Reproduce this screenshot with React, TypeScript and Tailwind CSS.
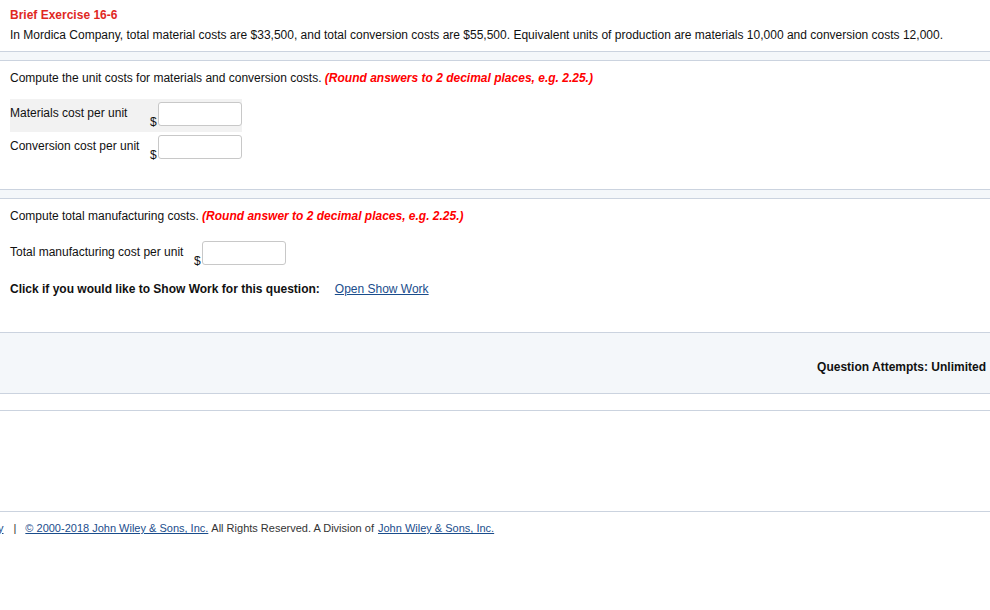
import React from "react";

function Band({ h }: { h: string }) {
  return <div className={`border-y border-[#cbd3df] bg-[#f4f7fa] ${h}`} />;
}

function Row({
  label,
  labelW,
  bg,
}: {
  label: string;
  labelW: string;
  bg?: boolean;
}) {
  return (
    <div className={`flex h-[33px] w-fit ${bg ? "bg-[#f2f2f2]" : ""}`}>
      <div className={`${labelW} pt-[7px] leading-[15px]`}>{label}</div>
      <div className="flex">
        <span className="pt-[17px] text-[12px] leading-[12px] w-[8px]">$</span>
        <div className="mt-[3px] h-[24px] w-[84px] rounded-[3px] border border-[#c8c8c8] bg-white" />
      </div>
    </div>
  );
}

export default function App() {
  return (
    <div
      className="w-[990px] h-[610px] bg-white text-[12px] text-[#111] overflow-hidden"
      style={{ fontFamily: '"Liberation Sans", Arial, sans-serif' }}
    >
      <div className="px-[10px] pt-[8px] pb-[8px]">
        <div className="font-bold text-[#e0281f] leading-[15px]">Brief Exercise 16-6</div>
        <div className="mt-[5px] leading-[15px]">
          In Mordica Company, total material costs are $33,500, and total conversion costs are $55,500. Equivalent units of production are materials 10,000 and conversion costs 12,000.
        </div>
      </div>
      <Band h="h-[10px]" />
      <div className="px-[10px] pt-[10px] pb-[24px]">
        <div className="leading-[15px]">
          Compute the unit costs for materials and conversion costs.{" "}
          <span className="font-bold italic text-[#f00]">
            (Round answers to 2 decimal places, e.g. 2.25.)
          </span>
        </div>
        <div className="mt-[13px]">
          <Row label="Materials cost per unit" labelW="w-[140px]" bg />
          <Row label="Conversion cost per unit" labelW="w-[140px]" />
        </div>
      </div>
      <Band h="h-[10px]" />
      <div className="px-[10px] pt-[10px] pb-[35px]">
        <div className="leading-[15px]">
          Compute total manufacturing costs.{" "}
          <span className="font-bold italic text-[#f00]">
            (Round answer to 2 decimal places, e.g. 2.25.)
          </span>
        </div>
        <div className="mt-[14px]">
          <Row label="Total manufacturing cost per unit" labelW="w-[184px]" />
        </div>
        <div className="mt-[11px] leading-[15px] flex">
          <span className="font-bold">Click if you would like to Show Work for this question:</span>
          <a className="ml-[15px] text-[#1a4d8c] underline" href="#">
            Open Show Work
          </a>
        </div>
      </div>
      <div className="h-[62px] border-y border-[#cbd3df] bg-[#f4f7fa] pt-[27px] pr-[4px] text-right font-bold leading-[15px]">
        Question Attempts: Unlimited
      </div>
      <div className="mt-[16px] border-t border-[#cbd3df] h-[101px]" />
      <div className="border-t border-[#cbd3df] pt-[9px] leading-[15px] text-[11px] text-[#333] flex">
        <a className="text-[#1a4d8c] underline ml-[-2px]" href="#">y</a>
        <span className="ml-[10px]">|</span>
        <a className="ml-[9px] text-[#1a4d8c] underline" href="#">
          © 2000-2018 John Wiley &amp; Sons, Inc.
        </a>
        <span className="ml-[3px]">All Rights Reserved. A Division of</span>
        <a className="ml-[4px] text-[#1a4d8c] underline" href="#">
          John Wiley &amp; Sons, Inc.
        </a>
      </div>
    </div>
  );
}
